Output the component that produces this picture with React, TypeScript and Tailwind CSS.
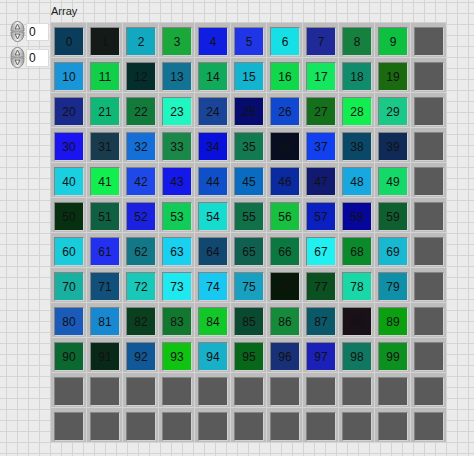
import React from 'react'

const COLORS: string[] = [
  '#0a3d5c', '#141a18', '#12a8c0', '#1aa83a', '#0f1ee0', '#1f35e6', '#16e0e6', '#1f2a98', '#16803e', '#0fc040',
  '#1a95d8', '#12cf4a', '#032e2c', '#137394', '#10aa5a', '#12b4d0', '#10d84a', '#14e660', '#108c6c', '#1a6a0f',
  '#1a2a8c', '#10b878', '#127a3a', '#20f6c0', '#1a4498', '#060c6e', '#1048d0', '#15701c', '#12ee50', '#1ac888',
  '#1a14f0', '#183c4e', '#1470d8', '#1a8848', '#0a10dc', '#127a50', '#080e20', '#1040f0', '#0a4868', '#102a58',
  '#1ad0e0', '#12ee50', '#1e48e8', '#1418e8', '#0f50c8', '#0a6cc0', '#0a2aa0', '#121a70', '#18a8e0', '#14d868',
  '#063010', '#0f6040', '#1a22e0', '#12cc58', '#16dcd0', '#107048', '#18c040', '#0a20c0', '#06069a', '#0f6030',
  '#18ccdc', '#2430f0', '#127888', '#18d0f0', '#104870', '#106050', '#0a7840', '#20f0f0', '#0a8a2a', '#18b8d0',
  '#18b0a0', '#10507a', '#18c8b8', '#20e8f0', '#18c8f0', '#18a0c0', '#081808', '#0a5020', '#18d8a8', '#1090a8',
  '#1a5ab8', '#1888d0', '#0a4020', '#127830', '#12c828', '#0a4a30', '#148a3a', '#0a5868', '#1a1018', '#0aa010',
  '#0a6830', '#082818', '#105898', '#0fc410', '#18b0c8', '#066818', '#183078', '#1a20b8', '#107860', '#0c9020',
]

const Spinner: React.FC = () => (
  <svg width="15" height="21" viewBox="0 0 15 21">
    <defs>
      <linearGradient id="sp" x1="0" x2="1" y1="0" y2="0">
        <stop offset="0" stopColor="#9a9a9a" />
        <stop offset="0.5" stopColor="#f4f4f4" />
        <stop offset="1" stopColor="#9a9a9a" />
      </linearGradient>
    </defs>
    <path d="M7.5 0.5 C11.5 0.5 14 4 14 10 L1 10 C1 4 3.5 0.5 7.5 0.5 Z" fill="url(#sp)" stroke="#8a8a8a" />
    <path d="M7.5 20.5 C11.5 20.5 14 17 14 11 L1 11 C1 17 3.5 20.5 7.5 20.5 Z" fill="url(#sp)" stroke="#8a8a8a" />
    <path d="M7.5 3 L10 8 L5 8 Z" fill="none" stroke="#555" strokeWidth="0.9" />
    <path d="M7.5 18 L10 13 L5 13 Z" fill="none" stroke="#555" strokeWidth="0.9" />
  </svg>
)

const IndexControl: React.FC = () => (
  <div className="flex items-center">
    <Spinner />
    <div className="ml-[1px] w-[23px] h-[18px] bg-white border border-[#dadada] text-[12px] leading-[16px] pl-[2px] text-[#111]">
      0
    </div>
  </div>
)

export default function App() {
  const cells = Array.from({ length: 132 }, (_, i) => {
    const r = Math.floor(i / 11)
    const c = i % 11
    const idx = r * 10 + c
    const filled = r < 10 && c < 10
    return { key: i, idx, color: filled ? COLORS[idx] : '#5a5a5a', filled }
  })

  return (
    <div
      className="w-[474px] h-[456px] overflow-hidden flex bg-[#ebebeb] bg-[linear-gradient(to_right,#d4d4d4_1px,transparent_1px),linear-gradient(to_bottom,#d4d4d4_1px,transparent_1px)] bg-[size:11px_11px] bg-[position:6px_2px]"
      style={{ fontFamily: '"Liberation Sans", Arial, sans-serif' }}
    >
      <div className="flex flex-col gap-[5px] pt-[21px] pl-[10px] w-[50px]">
        <IndexControl />
        <IndexControl />
      </div>
      <div className="flex flex-col pt-[3px]">
        <div className="h-[19px] text-[11px] leading-[16px] text-[#222] pl-[1px]">Array</div>
        <div className="grid grid-cols-[repeat(11,36px)] grid-rows-[repeat(12,35px)] bg-[#bdbdbd] border-t border-l border-[#cfcfcf]">
          {cells.map((cell) => (
            <div
              key={cell.key}
              className="pl-[3px] pt-[4px] border-r border-b border-[#d4d4d4]"
            >
              <div className="w-[30px] h-[29px] border border-t-[#848484] border-l-[#848484] border-b-[#d2d2d2] border-r-[#d2d2d2] flex">
                <div
                  className="flex-1 flex items-center justify-center text-[12px] text-[#111]"
                  style={{ backgroundColor: cell.color }}
                >
                  {cell.filled ? cell.idx : ''}
                </div>
              </div>
            </div>
          ))}
        </div>
      </div>
    </div>
  )
}
